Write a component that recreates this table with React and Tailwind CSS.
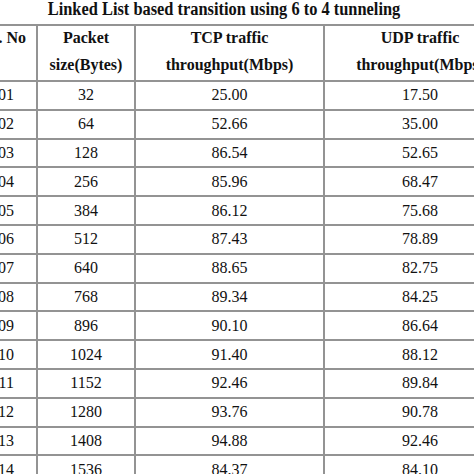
const ROWS = [
  ['001', '32', '25.00', '17.50'],
  ['002', '64', '52.66', '35.00'],
  ['003', '128', '86.54', '52.65'],
  ['004', '256', '85.96', '68.47'],
  ['005', '384', '86.12', '75.68'],
  ['006', '512', '87.43', '78.89'],
  ['007', '640', '88.65', '82.75'],
  ['008', '768', '89.34', '84.25'],
  ['009', '896', '90.10', '86.64'],
  ['10', '1024', '91.40', '88.12'],
  ['11', '1152', '92.46', '89.84'],
  ['12', '1280', '93.76', '90.78'],
  ['13', '1408', '94.88', '92.46'],
  ['14', '1536', '84.37', '84.10'],
];

const App = () => {
  return (
    <div
      className="w-[474px] h-[474px] overflow-hidden bg-white text-[#111]"
      style={{ fontFamily: '"Liberation Serif", "Times New Roman", serif' }}
    >
      <div className="h-[24px] pr-[26px] flex justify-center">
        <div className="text-[16.4px] font-bold leading-[16px] scale-y-[1.12] origin-top">
          Linked List based transition using 6 to 4 tunneling
        </div>
      </div>

      <div className="-ml-[24px] w-[580px] border-t-2 border-[#939393]">
        {/* Header */}
        <div className="grid grid-cols-[62px_98px_189px_231px] h-[56px] border-b-2 border-[#939393] text-[16px] font-bold leading-[27px]">
          <div className="border-r-2 border-[#939393] text-right pr-[10px]">
            <div className="-mt-[2px]">S. No</div>
          </div>
          <div className="border-r-2 border-[#939393] text-center">
            <div className="-mt-[2px]">Packet</div>
            <div>size(Bytes)</div>
          </div>
          <div className="border-r-2 border-[#939393] text-center">
            <div className="-mt-[2px]">TCP traffic</div>
            <div>throughput(Mbps)</div>
          </div>
          <div className="text-center pr-[41px]">
            <div className="-mt-[2px]">UDP traffic</div>
            <div>throughput(Mbps)</div>
          </div>
        </div>

        {ROWS.map((r) => (
          <div
            key={r[0]}
            className="grid grid-cols-[62px_98px_189px_231px] h-[28.8px] border-b-2 border-[#939393] text-[16px] leading-none"
          >
            <div className="border-r-2 border-[#939393] flex items-center justify-end pr-[22px]">{r[0]}</div>
            <div className="border-r-2 border-[#939393] flex items-center justify-center">{r[1]}</div>
            <div className="border-r-2 border-[#939393] flex items-center justify-center">{r[2]}</div>
            <div className="flex items-center justify-center pr-[41px]">{r[3]}</div>
          </div>
        ))}
      </div>
    </div>
  );
};

export default App;
